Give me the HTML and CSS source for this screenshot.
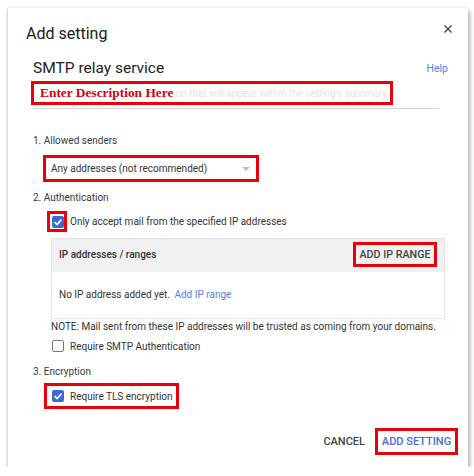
FILE: index.html
```html
<!DOCTYPE html>
<html>
<head>
<meta charset="utf-8">
<link rel="stylesheet" href="styles.css">
</head>
<body>
<div class="dialog">
  <div class="head">
    <div class="title">Add setting</div>
    <svg class="close" width="10" height="10" viewBox="0 0 10 10"><path d="M1.5 1.5 L8.5 8.5 M8.5 1.5 L1.5 8.5" stroke="#555" stroke-width="1.6" fill="none"/></svg>
  </div>
  <div class="content">
    <div class="name-row">
      <span class="name">SMTP relay service</span>
      <span class="help">Help</span>
    </div>
    <div class="desc-field">
      <div class="desc-box hl">
        <span class="desc-label">Enter Description Here</span>
        <span class="desc-ph">on that will appear within the setting's summary</span>
      </div>
    </div>

    <div class="sec-title first">1. Allowed senders</div>
    <div class="select hl">
      <span>Any addresses (not recommended)</span>
      <span class="caret"></span>
    </div>

    <div class="sec-title second">2. Authentication</div>
    <div class="check-row first-check">
      <span class="check-hl hl"><span class="cb checked"><svg width="12" height="12" viewBox="0 0 12 12"><path d="M2.6 6.2 L5 8.5 L9.5 3.6" stroke="#fff" stroke-width="1.6" fill="none"/></svg></span></span>
      <span class="label">Only accept mail from the specified IP addresses</span>
    </div>

    <div class="ip-table">
      <div class="ip-head">
        <span class="ip-title">IP addresses / ranges</span>
        <span class="ip-add hl">ADD IP RANGE</span>
      </div>
      <div class="ip-body">No IP address added yet. <span class="link">Add IP range</span></div>
    </div>
    <div class="note">NOTE: Mail sent from these IP addresses will be trusted as coming from your domains.</div>
    <div class="check-row smtp-auth">
      <span class="cb"></span>
      <span class="label">Require SMTP Authentication</span>
    </div>

    <div class="sec-title third">3. Encryption</div>
    <div class="tls hl">
      <span class="cb checked"><svg width="12" height="12" viewBox="0 0 12 12"><path d="M2.6 6.2 L5 8.5 L9.5 3.6" stroke="#fff" stroke-width="1.6" fill="none"/></svg></span>
      <span class="label">Require TLS encryption</span>
    </div>
  </div>
  <div class="actions">
    <span class="btn cancel">CANCEL</span>
    <span class="btn primary hl">ADD SETTING</span>
  </div>
</div>
</body>
</html>
```

FILE: styles.css
```css
html, body {
  margin: 0;
  padding: 0;
  background: #fff;
}
body {
  font-family: Roboto, "Liberation Sans", Arial, sans-serif;
  color: #333;
  font-size: 10px;
}
.dialog {
  margin: 8px 0 0 7px;
  width: 461px;
  height: 459px;
  box-sizing: border-box;
  background: #fff;
  border-left: 1px solid #dcdcdc;
  box-shadow: 0 0 2px rgba(0,0,0,0.12), 2px 3px 4px rgba(0,0,0,0.28);
  display: flex;
  flex-direction: column;
}
.head {
  display: flex;
  justify-content: space-between;
  align-items: flex-start;
  padding: 16px 15px 0 18px;
}
.title {
  font-size: 16px;
  line-height: 20px;
  color: #202020;
}
.close {
  display: block;
}
.content {
  padding: 0 20px 0 25px;
}
.name-row {
  margin-top: 14px;
  display: flex;
  justify-content: space-between;
  align-items: center;
  height: 20px;
}
.name {
  font-size: 15.5px;
  line-height: 20px;
  color: #222;
}
.help {
  color: #4f7fe6;
  font-size: 10.5px;
}
.hl {
  border: 3px solid #e8000a;
  box-sizing: border-box;
}
.desc-field {
  width: 406px;
  margin-top: 3px;
  padding-bottom: 3px;
  border-bottom: 1px solid #cfd2d6;
}
.desc-box {
  margin-left: -2px;
  width: 362px;
  height: 24px;
  display: flex;
  align-items: center;
  padding-left: 6px;
  overflow: hidden;
  white-space: nowrap;
}
.desc-label {
  font-family: "Liberation Serif", "Times New Roman", serif;
  font-weight: bold;
  font-size: 13.4px;
  color: #d40010;
}
.desc-ph {
  color: #e4e4e4;
  font-size: 10px;
  margin-left: 2px;
}
.sec-title {
  line-height: 16px;
  color: #3a3a3a;
}
.sec-title.first {
  margin-top: 24px;
}
.sec-title.second {
  margin-top: 8px;
}
.sec-title.third {
  margin-top: 10px;
}
.select {
  margin: 6px 0 0 10px;
  width: 216px;
  height: 27px;
  display: flex;
  align-items: center;
  justify-content: space-between;
  padding: 0 6px 0 5px;
  color: #333;
}
.caret {
  width: 0;
  height: 0;
  border-left: 4px solid transparent;
  border-right: 4px solid transparent;
  border-top: 4px solid #bdbdbd;
}
.check-row {
  display: flex;
  align-items: center;
  white-space: nowrap;
}
.first-check {
  margin: 5px 0 0 14px;
  height: 21px;
}
.check-hl {
  width: 20px;
  height: 21px;
  display: flex;
  align-items: center;
  padding-left: 2px;
}
.first-check .label {
  margin-left: 3px;
}
.cb {
  width: 12px;
  height: 12px;
  box-sizing: border-box;
  border: 1.5px solid #7a7a7a;
  border-radius: 2px;
  display: inline-flex;
  align-items: center;
  justify-content: center;
  flex: none;
}
.cb.checked {
  background: #3e68d6;
  border: none;
}
.cb svg {
  display: block;
}
.label {
  color: #333;
}
.ip-table {
  margin: 6px 0 0 18px;
  width: 392px;
  border: 1px solid #e3e3e3;
}
.ip-head {
  background: #f1f1f1;
  height: 33px;
  display: flex;
  justify-content: space-between;
  align-items: flex-start;
  padding: 0 7px;
}
.ip-title {
  font-weight: 500;
  color: #333;
  line-height: 16px;
  margin-top: 8px;
}
.ip-add {
  margin-top: 3px;
  width: 84px;
  height: 25px;
  display: flex;
  align-items: center;
  justify-content: center;
  font-weight: 500;
  color: #444;
  font-size: 10.7px;
}
.ip-body {
  padding: 15px 7px 15px;
  line-height: 16px;
  color: #333;
}
.link {
  color: #5581e4;
  margin-left: 2px;
}
.note {
  margin-left: 18px;
  line-height: 16px;
  color: #333;
  white-space: nowrap;
}
.smtp-auth {
  margin: 3px 0 0 19px;
  height: 16px;
}
.smtp-auth .label {
  margin-left: 6px;
}
.tls {
  margin: 3px 0 0 11px;
  width: 135px;
  height: 26px;
  display: flex;
  align-items: center;
  padding-left: 5px;
  white-space: nowrap;
}
.tls .label {
  margin-left: 6px;
}
.actions {
  display: flex;
  justify-content: flex-end;
  align-items: center;
  padding-right: 10px;
  margin-top: 19px;
}
.btn {
  font-weight: 500;
  font-size: 11px;
}
.cancel {
  color: #444;
  margin-right: 10px;
}
.primary {
  color: #4a6cd4;
  width: 83px;
  height: 27px;
  display: flex;
  align-items: center;
  justify-content: center;
}
```
